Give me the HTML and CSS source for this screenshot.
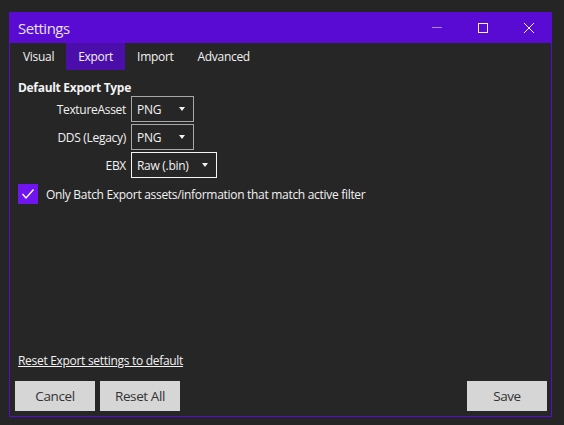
FILE: index.html
```html
<!DOCTYPE html>
<html>
<head>
<meta charset="utf-8">
<link rel="stylesheet" href="styles.css">
</head>
<body>
<div class="window">
  <div class="titlebar">
    <span class="title">Settings</span>
    <div class="controls">
      <span class="ctl"><svg width="12" height="12" viewBox="0 0 12 12"><line x1="1" y1="5.5" x2="11" y2="5.5" stroke="#a98be0" stroke-width="1"/></svg></span>
      <span class="ctl"><svg width="12" height="12" viewBox="0 0 12 12"><rect x="1.5" y="1.5" width="9" height="9" fill="none" stroke="#f0f0f0" stroke-width="1"/></svg></span>
      <span class="ctl"><svg width="12" height="12" viewBox="0 0 12 12"><path d="M1 1 L11 11 M11 1 L1 11" stroke="#f0f0f0" stroke-width="1"/></svg></span>
    </div>
  </div>
  <div class="frame">
    <div class="tabs">
      <span class="tab">Visual</span>
      <span class="tab active">Export</span>
      <span class="tab">Import</span>
      <span class="tab">Advanced</span>
    </div>
    <div class="content">
      <div class="section-title">Default Export Type</div>
      <div class="form">
        <span class="label">TextureAsset</span>
        <div class="select"><span>PNG</span><span class="arrow"></span></div>
        <span class="label">DDS (Legacy)</span>
        <div class="select"><span>PNG</span><span class="arrow"></span></div>
        <span class="label">EBX</span>
        <div class="select wide focused"><span>Raw (.bin)</span><span class="arrow"></span></div>
      </div>
      <div class="check-row">
        <span class="checkbox"><svg width="20" height="20" viewBox="0 0 20 20"><polyline points="4.5,10 8,14 15.5,5.5" fill="none" stroke="#ffffff" stroke-width="1.4"/></svg></span>
        <span class="check-label">Only Batch Export assets/information that match active filter</span>
      </div>
      <a class="reset-link">Reset Export settings to default</a>
    </div>
    <div class="footer">
      <div class="left-buttons">
        <button class="btn">Cancel</button>
        <button class="btn">Reset All</button>
      </div>
      <button class="btn">Save</button>
    </div>
  </div>
</div>
</body>
</html>
```
FILE: styles.css
```css
html, body {
  margin: 0;
  padding: 0;
  background: #252525;
  font-family: "Open Sans", "Noto Sans", sans-serif;
  font-size: 12px;
  letter-spacing: -0.3px;
  color: #f2f2f2;
}
.window {
  margin: 12px 0 0 9px;
  width: 543px;
  height: 405px;
  display: flex;
  flex-direction: column;
}
.titlebar {
  height: 31px;
  background: #5a0bd3;
  display: flex;
  align-items: center;
  justify-content: space-between;
  padding-left: 9px;
}
.title {
  font-size: 15px;
  letter-spacing: -0.5px;
  color: #e6e2f2;
}
.controls {
  display: flex;
  height: 100%;
}
.ctl {
  width: 46px;
  display: flex;
  align-items: center;
  justify-content: center;
}
.frame {
  flex: 1;
  display: flex;
  flex-direction: column;
  border: 1px solid #5a0bd3;
  border-top: none;
  background: #262626;
}
.tabs {
  display: flex;
  height: 27px;
  padding-left: 1px;
}
.tab {
  padding: 0 12px;
  display: flex;
  align-items: center;
  color: #f2f2f2;
}
.tab.active {
  background: #4b0eaa;
}
.content {
  flex: 1;
  display: flex;
  flex-direction: column;
  padding: 10px 8px 0 8px;
}
.section-title {
  font-weight: bold;
  line-height: 16px;
}
.form {
  display: grid;
  grid-template-columns: 108px auto;
  column-gap: 5px;
  row-gap: 2px;
  justify-content: start;
  align-items: center;
}
.label {
  text-align: right;
}
.select {
  width: 63px;
  height: 26px;
  box-sizing: border-box;
  border: 1px solid #a8a8a8;
  display: flex;
  align-items: center;
  justify-content: space-between;
  padding: 0 8px 0 5px;
}
.select.wide {
  width: 86px;
}
.select.focused {
  border-color: #f4f4f4;
}
.arrow {
  width: 0;
  height: 0;
  border-left: 3.5px solid transparent;
  border-right: 3.5px solid transparent;
  border-top: 4px solid #f2f2f2;
}
.check-row {
  display: flex;
  align-items: center;
  margin-top: 6px;
  gap: 8px;
}
.checkbox {
  width: 20px;
  height: 20px;
  background: #7014f0;
  display: flex;
}
.reset-link {
  margin-top: auto;
  margin-bottom: 12px;
  line-height: 16px;
  text-decoration: underline;
  color: #f2f2f2;
  align-self: flex-start;
}
.footer {
  display: flex;
  justify-content: space-between;
  padding: 0 4px 5px 5px;
}
.left-buttons {
  display: flex;
  gap: 5px;
}
.btn {
  width: 80px;
  height: 30px;
  background: #d6d6d6;
  border: none;
  margin: 0;
  font-family: "Open Sans", "Noto Sans", sans-serif;
  font-size: 13.5px;
  letter-spacing: -0.4px;
  color: #333333;
}
```
